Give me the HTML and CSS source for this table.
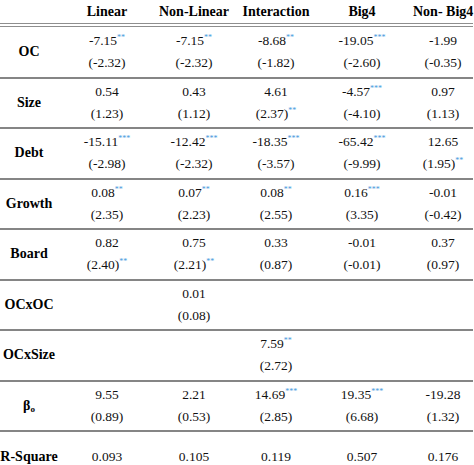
FILE: index.html
```html
<!DOCTYPE html>
<html>
<head>
    <meta charset="UTF-8">
    <title>Regression results</title>
    <link rel="stylesheet" href="styles.css">
</head>
<body>
    <div class="page">
        <table class="results">
            <colgroup>
                <col class="col-label">
                <col class="col-linear">
                <col class="col-nonlinear">
                <col class="col-interaction">
                <col class="col-big4">
                <col class="col-nonbig4">
            </colgroup>
            <thead>
                <tr>
                    <th></th>
                    <th>Linear</th>
                    <th>Non-Linear</th>
                    <th>Interaction</th>
                    <th>Big4</th>
                    <th>Non- Big4</th>
                </tr>
            </thead>
            <tbody>
                <tr>
                    <td class="label">OC</td>
                    <td><div>-7.15<sup class="sig">**</sup></div><div>(-2.32)</div></td>
                    <td><div>-7.15<sup class="sig">**</sup></div><div>(-2.32)</div></td>
                    <td><div>-8.68<sup class="sig">**</sup></div><div>(-1.82)</div></td>
                    <td><div>-19.05<sup class="sig">***</sup></div><div>(-2.60)</div></td>
                    <td><div>-1.99</div><div>(-0.35)</div></td>
                </tr>
                <tr>
                    <td class="label">Size</td>
                    <td><div>0.54</div><div>(1.23)</div></td>
                    <td><div>0.43</div><div>(1.12)</div></td>
                    <td><div>4.61</div><div>(2.37)<sup class="sig">**</sup></div></td>
                    <td><div>-4.57<sup class="sig">***</sup></div><div>(-4.10)</div></td>
                    <td><div>0.97</div><div>(1.13)</div></td>
                </tr>
                <tr>
                    <td class="label">Debt</td>
                    <td><div>-15.11<sup class="sig">***</sup></div><div>(-2.98)</div></td>
                    <td><div>-12.42<sup class="sig">***</sup></div><div>(-2.32)</div></td>
                    <td><div>-18.35<sup class="sig">***</sup></div><div>(-3.57)</div></td>
                    <td><div>-65.42<sup class="sig">***</sup></div><div>(-9.99)</div></td>
                    <td><div>12.65</div><div>(1.95)<sup class="sig">**</sup></div></td>
                </tr>
                <tr>
                    <td class="label">Growth</td>
                    <td><div>0.08<sup class="sig">**</sup></div><div>(2.35)</div></td>
                    <td><div>0.07<sup class="sig">**</sup></div><div>(2.23)</div></td>
                    <td><div>0.08<sup class="sig">**</sup></div><div>(2.55)</div></td>
                    <td><div>0.16<sup class="sig">***</sup></div><div>(3.35)</div></td>
                    <td><div>-0.01</div><div>(-0.42)</div></td>
                </tr>
                <tr>
                    <td class="label">Board</td>
                    <td><div>0.82</div><div>(2.40)<sup class="sig">**</sup></div></td>
                    <td><div>0.75</div><div>(2.21)<sup class="sig">**</sup></div></td>
                    <td><div>0.33</div><div>(0.87)</div></td>
                    <td><div>-0.01</div><div>(-0.01)</div></td>
                    <td><div>0.37</div><div>(0.97)</div></td>
                </tr>
                <tr>
                    <td class="label">OCxOC</td>
                    <td></td>
                    <td><div>0.01</div><div>(0.08)</div></td>
                    <td></td>
                    <td></td>
                    <td></td>
                </tr>
                <tr>
                    <td class="label">OCxSize</td>
                    <td></td>
                    <td></td>
                    <td><div>7.59<sup class="sig">**</sup></div><div>(2.72)</div></td>
                    <td></td>
                    <td></td>
                </tr>
                <tr>
                    <td class="label">&beta;<sub>o</sub></td>
                    <td><div>9.55</div><div>(0.89)</div></td>
                    <td><div>2.21</div><div>(0.53)</div></td>
                    <td><div>14.69<sup class="sig">***</sup></div><div>(2.85)</div></td>
                    <td><div>19.35<sup class="sig">***</sup></div><div>(6.68)</div></td>
                    <td><div>-19.28</div><div>(1.32)</div></td>
                </tr>
                <tr class="last">
                    <td class="label">R-Square</td>
                    <td>0.093</td>
                    <td>0.105</td>
                    <td>0.119</td>
                    <td>0.507</td>
                    <td>0.176</td>
                </tr>
            </tbody>
        </table>
    </div>
</body>
</html>
```
FILE: styles.css
```css
* {
    margin: 0;
    padding: 0;
    box-sizing: border-box;
}

body {
    font-family: "Liberation Serif", "Times New Roman", serif;
    background-color: #fff;
    color: #111;
}

.page {
    width: 474px;
    height: 465px;
    overflow: hidden;
}

.results {
    border-collapse: separate;
    border-spacing: 0;
    table-layout: fixed;
    width: 482px;
    margin-left: -9px;
}

.col-label { width: 76px; }
.col-linear { width: 80px; }
.col-nonlinear { width: 94px; }
.col-interaction { width: 70px; }
.col-big4 { width: 102px; }
.col-nonbig4 { width: 60px; }

.results th {
    font-size: 14px;
    font-weight: bold;
    line-height: 22px;
    padding-top: 1px;
    text-align: center;
    white-space: nowrap;
    color: #000;
    border-bottom: 4px double #8e8e8e;
}

.results td {
    font-size: 13.5px;
    line-height: 22px;
    padding: 2px 0 2.5px;
    text-align: center;
    vertical-align: middle;
    white-space: nowrap;
    border-bottom: 2px solid #858585;
}

.results tbody tr:first-child td {
    padding-top: 3px;
}

.results tr.last td {
    padding-top: 14px;
}

.results td.label {
    font-size: 14px;
    font-weight: bold;
    color: #000;
}

.label sub {
    font-size: 9px;
    vertical-align: -2px;
    line-height: 0;
}

.sig {
    color: #3f97dc;
    font-size: 8px;
    line-height: 0;
    vertical-align: 5px;
}
```
